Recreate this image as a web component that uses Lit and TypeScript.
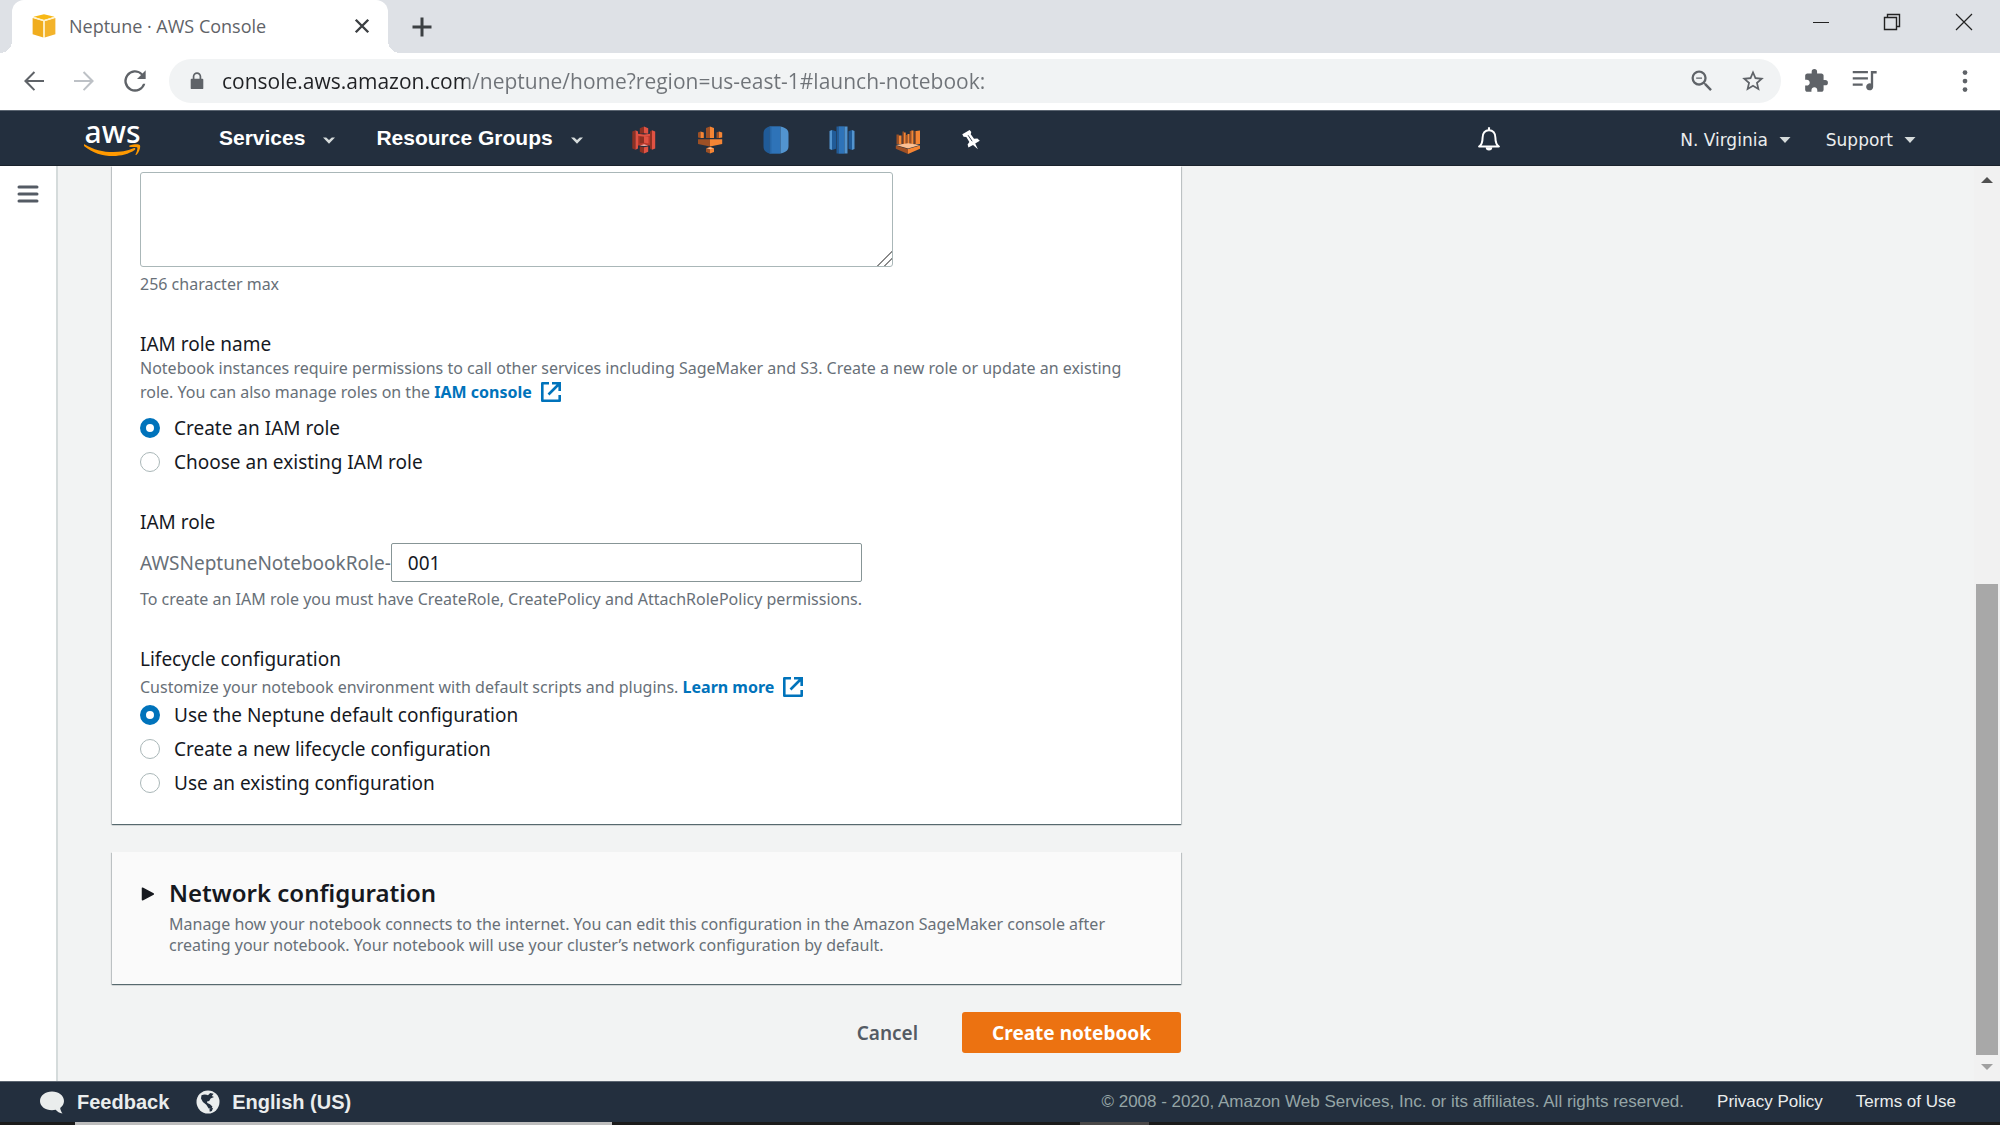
import { LitElement, html, svg, css } from "lit";
import { customElement, property, state } from "lit/decorators.js";

/* ---------- icons ---------- */

const icon = (size: number, body: unknown, box = "0 0 24 24") => html`<svg
  width=${size}
  height=${size}
  viewBox=${box}
  fill="currentColor"
  aria-hidden="true"
>${body}</svg>`;

const icons = {
  cube: icon(26, svg`
    <path fill="#f0ad1e" d="M1.5 4.5 11.4 7.6v15L1.5 19.6z"/>
    <path fill="#f3b32b" d="M22.5 4.5 12.6 7.6v15l9.9-3z"/>
    <path fill="#f8b814" d="M12 1.2 21.6 3.400 12 6.400 2.400 3.400z"/>
    <path fill="none" stroke="#fff2c8" stroke-width="1" d="M2 3.900 12 7l10-3.100M12 7v15.500"/>`),
  close: icon(20, svg`<path fill="none" stroke="currentColor" stroke-width="2.900" d="m4.500 4.500 15 15m0-15-15 15"/>`),
  plus: icon(24, svg`<path fill="none" stroke="currentColor" stroke-width="3" d="M12 2.500v19M2.500 12h19"/>`),
  minimize: icon(16, svg`<path fill="none" stroke="currentColor" d="M0 8.500h16"/>`, "0 0 16 16"),
  restore: icon(18, svg`<path fill="none" stroke="currentColor" stroke-width="1.400" d="M1.500 4.500h12v12h-12zM4.500 4.500v-3h12v12h-3"/>`, "0 0 18 18"),
  windowClose: icon(18, svg`<path fill="none" stroke="currentColor" stroke-width="1.200" d="m1 1 16 16m0-16L1 17"/>`, "0 0 18 18"),
  back: icon(30, svg`<path d="M20 11.200H7.200l5.700-5.900L11.800 4.200 4 12l7.800 7.800 1.100-1.100-5.700-5.900H20z"/>`),
  forward: icon(30, svg`<path d="M4 11.200h12.800l-5.700-5.900 1.100-1.100L20 12l-7.800 7.800-1.100-1.100 5.700-5.900H4z"/>`),
  reload: icon(32, svg`<path d="M17.650 6.350A8 8 0 1 0 19.730 14h-1.700a6.300 6.300 0 1 1-1.500-6.500L13.500 10.500H20V4z"/>`),
  lock: icon(18, svg`<path d="M4 7.500h12a1 1 0 0 1 1 1V18a1 1 0 0 1-1 1H4a1 1 0 0 1-1-1V8.500a1 1 0 0 1 1-1z"/><path fill="none" stroke="currentColor" stroke-width="1.900" d="M6.200 8V5a3.800 3.800 0 0 1 7.600 0v3"/>`, "0 0 20 20"),
  zoomOut: icon(28, svg`<path d="M15.500 14h-.790l-.280-.270A6.470 6.470 0 0 0 16 9.500 6.500 6.500 0 1 0 9.500 16c1.610 0 3.090-.590 4.230-1.570l.270.280v.790l5 4.990L20.490 19zm-6 0C7.010 14 5 11.990 5 9.500S7.010 5 9.500 5 14 7.010 14 9.500 11.990 14 9.500 14M7 8.900h5v1.200H7z"/>`),
  star: icon(26, svg`<path d="m22 9.240-7.190-.620L12 2 9.190 8.630 2 9.240l5.460 4.730L5.820 21 12 17.270 18.180 21l-1.630-7.030zM12 15.400l-3.760 2.270 1-4.280-3.320-2.880 4.380-.380L12 6.100l1.710 4.040 4.380.380-3.320 2.880 1 4.280z"/>`),
  puzzle: icon(26, svg`<path d="M20.500 11H19V7c0-1.100-.900-2-2-2h-4V3.500a2.500 2.500 0 0 0-5 0V5H4c-1.100 0-1.990.900-1.990 2v3.800H3.500c1.490 0 2.700 1.210 2.700 2.700s-1.210 2.700-2.700 2.700H2V20c0 1.100.900 2 2 2h3.800v-1.500c0-1.490 1.210-2.700 2.700-2.700s2.700 1.210 2.700 2.700V22H17c1.100 0 2-.900 2-2v-4h1.500a2.500 2.500 0 0 0 0-5"/>`),
  music: icon(28, svg`<path d="M1.500 3.500h13v1.900h-13zM1.500 8.800h13v1.900h-13zM1.500 14.200h8.500v1.900H1.500zM17 3.500h5v2h-3v11.500a3 3 0 1 1-2-2.800z"/>`),
  dots: icon(30, svg`<circle cx="12" cy="5.200" r="1.900"/><circle cx="12" cy="12" r="1.900"/><circle cx="12" cy="18.800" r="1.900"/>`),
  chevron: icon(14, svg`<path d="M1 4.500h3.200L7 7l2.800-2.500H13L7 10.800z"/>`, "0 0 14 14"),
  caret: icon(12, svg`<path d="M.500 3h11L6 9z"/>`, "0 0 12 12"),
  bell: icon(28, svg`<path fill="none" stroke="currentColor" stroke-width="1.700" stroke-linejoin="round" d="M3.500 18.500c2-1.300 3-3 3-7.500 0-4 2.200-6.600 5.500-6.600s5.500 2.600 5.500 6.600c0 4.500 1 6.200 3 7.500z"/><path d="M11.100 2h1.800v2.800h-1.800zM9.200 19h5.600a2.800 2.800 0 0 1-5.600 0z"/>`),
  pin: icon(22, svg`<path d="M2.500 5.800 10.500 1.200l1.800 2-.6 2.600 3.600 4.700 3.700-.2 2.600 2.600-5 3L19.500 22l-5.300-4.600-5 2.800-.9-3.300 1.900-2.800-3.300-5.400-3-.2z"/><path fill="none" stroke="#232f3e" stroke-width="1" d="m8.800 6.800 4.500 6.600"/>`),
  menu: icon(22, svg`<path fill="none" stroke="currentColor" stroke-width="3" stroke-linecap="round" d="M2 4h18M2 11h18M2 18h18"/>`, "0 0 22 22"),
  external: icon(22, svg`<path fill="none" stroke="currentColor" stroke-width="2.600" stroke-linejoin="round" d="M9 2.300H2.300v17.400h17.400V14"/><path fill="none" stroke="currentColor" stroke-width="2.600" d="M12 2.300h7.700V10M19.500 2.500 8.500 13.500"/>`, "0 0 22 22"),
  triangle: icon(14, svg`<path stroke="currentColor" stroke-linejoin="round" stroke-width="1.500" d="M1.500 1.200v11.600L12.300 7z"/>`, "0 0 14 14"),
  bubble: icon(26, svg`<path d="M13 2.500c6.600 0 12 4 12 9.400 0 2.900-1.500 5.300-3.800 7 .2 2 1 3.800 2.300 5.500-3-.3-5.300-1.600-6.800-3.600-1.200.3-2.400.4-3.700.4-6.600 0-12-4-12-9.300S6.400 2.500 13 2.500z"/>`, "0 0 26 26"),
  globe: icon(24, svg`<circle cx="12" cy="12" r="11.500"/><path fill="#232f3e" d="M5.500 5.200c2.500-1.200 5-.8 6.500.1l2.200-2.300 3.400.8-1.800 2.200 2.200 1-3.400 1.500-1.400 2.600-2.200.3.300 1.600 2.700 1.200 2.400 2.300-.7 1.800-3 .2-2.400-3.700-3.400-2.900-1.900-3.500zM13.500 19l3.600-1.200-1.200 3.300-2.200.6z"/>`),
  storage: icon(28, svg`
    <path fill="#8c3123" d="M2.300 5.500 5.500 4.300v19.400l-3.200-1.200z"/><path fill="#e05243" d="M5.500 4.300 8 5.500v17l-2.500 1.200z"/>
    <path fill="#8c3123" d="M20 5.500l2-1.200v19.400l-2-1.200z"/><path fill="#e05243" d="m22 4.300 3.200 1.200v17L22 23.700z"/>
    <path fill="#b8392c" d="M8 8.500h12v11H8z"/>
    <path fill="#8c3123" d="M9.800 2.200 14 .500v6.800l-4.200.5zM9.800 25.800 14 27.500v-6.300l-4.200-.6zM9.500 10.500h4.500v6.300l-4.500.7z"/>
    <path fill="#e05243" d="M18.200 2.200 14 .500v6.800l4.200.5zM18.200 25.800 14 27.500v-6.300l4.200-.6zM18.500 10.500H14v6.300l4.500.7zM8 7.800l6 1 6-1v2l-6 .7-6-.7z"/>
    <path fill="#f2b0a9" d="m9.800 19.400 4.200.7 4.200-.7-4.200-1.100z"/>`, "0 0 28 28"),
  network: icon(28, svg`
    <path fill="#9d5025" d="M2 6.500 4.500 5.500v6.500L2 11.500zM10 2l4-1.500V12h-4zM20.500 6.500l2.500-1v6.500h-2.500z"/>
    <path fill="#f58534" d="m4.500 5.500 3.300 1V12H4.500zM14 .500 18 2v10h-4zM23 5.500l3.200 1v5l-3.200.5z"/>
    <path fill="#9d5025" d="M2 13.300h12v7.200L2 18z"/><path fill="#f58534" d="M26.200 13.300H14v7.200L26.200 18z"/>
    <path fill="#9d5025" d="M10 22.300 14 21v6.500L10 26z"/><path fill="#f58534" d="M18 22.300 14 21v6.500l4-1.500z"/>
    <path fill="#fbbf93" d="m10.500 22.300 3.500-1.100 3.500 1.100-3.500 1z"/>`, "0 0 28 28"),
  database: icon(28, svg`
    <path fill="#205b98" d="M1.500 8C1.500 4 3 2 7.500.500V27.500C3 26 1.500 24 1.500 20z"/>
    <path fill="#2e73b8" d="M7.500.300h11v27.400h-11z"/>
    <path fill="#5294cf" d="M18.500.500C24.500 2 26.500 4 26.500 8v12c0 4-2 6-8 7.500z"/>
    <path fill="#205b98" d="M7.500.500h2v27h-2z" opacity=".5"/>`, "0 0 28 28"),
  warehouse: icon(28, svg`
    <path fill="#5294cf" d="M1.500 5 4 4v20l-2.500-1z"/><path fill="#205b98" d="m4 4 4 1.200v17.600L4 24z"/>
    <path fill="#205b98" d="M8.500.500h2v27h-2z"/><path fill="#2e73b8" d="M10.500.300h6v27.400h-6z"/><path fill="#5294cf" d="M16.500.500h3v27h-3z"/>
    <path fill="#205b98" d="M20.500 5.200 24 4v20l-3.500-1.200z"/><path fill="#5294cf" d="M24 4l2.500 1v18L24 24z"/>`, "0 0 28 28"),
  mapreduce: icon(28, svg`
    <path fill="#9d5025" d="M2.500 8.500h2.300V18H2.500zM8.500 5.500h1.500v13H8.500zM12 9h1.500v9H12zM15.800 5h1.500v13h-1.500zM20.500 5h1.500v14h-1.500z"/>
    <path fill="#f58534" d="M4.800 9.500h2.700V18H4.800zM10 6.500h1.700V18H10zM13.500 8h2v10h-2zM17.300 4.500h2.200V18h-2.200zM22 5l4-.5V18h-4z"/>
    <path fill="#fbbf93" d="M1.800 19 14 17.200 26 19l-12 3.600z"/>
    <path fill="#9d5025" d="M1.800 19.600 14 23v5L1.800 22.800z"/><path fill="#f58534" d="M26 19.600 14 23v5l12-5.200z"/>`, "0 0 28 28"),
  arrowUp: icon(12, svg`<path d="M0 9h12L6 3z"/>`, "0 0 12 12"),
  arrowDown: icon(12, svg`<path d="M0 3h12L6 9z"/>`, "0 0 12 12"),
};

const reset = css`
  *,
  *::before,
  *::after {
    box-sizing: border-box;
  }
  svg {
    display: block;
    flex: none;
  }
  button,
  input,
  textarea {
    font: inherit;
    color: inherit;
    margin: 0;
  }
  button {
    display: inline-flex;
    align-items: center;
    justify-content: center;
    padding: 0;
    border: 0;
    background: none;
  }
  a {
    color: inherit;
    text-decoration: none;
  }
`;

/* ---------- browser window frame ---------- */

@customElement("browser-bar")
class BrowserBar extends LitElement {
  static styles = [
    reset,
    css`
      :host {
        display: block;
        font-family: "Open Sans", "Noto Sans", sans-serif;
        color: #5f6368;
      }
      .strip {
        display: flex;
        align-items: center;
        height: 53px;
        padding: 0 20px 0 12px;
        background: #dee1e6;
      }
      .tab {
        position: relative;
        display: flex;
        align-items: center;
        gap: 12px;
        width: 376px;
        height: 53px;
        padding: 0 16px 2px 19px;
        border-radius: 12px 12px 0 0;
        background: #fff;
      }
      .tab::before,
      .tab::after {
        content: "";
        position: absolute;
        bottom: 0;
        width: 12px;
        height: 12px;
      }
      .tab::before {
        right: 100%;
        background: radial-gradient(circle at 0 0, transparent 12px, #fff 12px);
      }
      .tab::after {
        left: 100%;
        background: radial-gradient(circle at 100% 0, transparent 12px, #fff 12px);
      }
      .title {
        flex: 1;
        font-size: 18px;
        white-space: nowrap;
      }
      .dark {
        color: #3c4043;
      }
      .new-tab {
        margin-left: 22px;
      }
      .window {
        display: flex;
        align-items: center;
        gap: 54px;
        height: 44px;
        margin: 0 7px 9px auto;
        color: #222;
      }
      .toolbar {
        display: flex;
        align-items: center;
        height: 57px;
        padding: 0 20px 2px 19px;
        background: #fff;
      }
      .history {
        display: flex;
        align-items: center;
        gap: 20px;
        margin-right: 18px;
      }
      .faded {
        color: #bdc1c6;
      }
      .address {
        flex: 1;
        display: flex;
        align-items: center;
        height: 44px;
        padding: 0 15px 0 19px;
        border-radius: 22px;
        background: #f1f3f4;
      }
      /* host part of the address is darker than the path */
      .url {
        flex: 1;
        min-width: 0;
        margin-left: 16px;
        padding: 0;
        border: 0;
        outline: 0;
        font-size: 21px;
        color: transparent;
        background: linear-gradient(to right, #202124 243px, #6f7378 243px);
        -webkit-background-clip: text;
        background-clip: text;
      }
      .address button + button {
        margin-left: 24px;
      }
      .tools {
        display: flex;
        align-items: center;
        gap: 22px;
        margin-left: 22px;
      }
      .more {
        margin-left: 49px;
      }
    `,
  ];

  render() {
    return html`
      <div class="strip">
        <div class="tab">
          ${icons.cube}
          <span class="title">Neptune · AWS Console</span>
          <button class="dark" aria-label="Close tab">${icons.close}</button>
        </div>
        <button class="new-tab dark" aria-label="New tab">${icons.plus}</button>
        <div class="window">
          <button aria-label="Minimize">${icons.minimize}</button>
          <button aria-label="Restore">${icons.restore}</button>
          <button aria-label="Close">${icons.windowClose}</button>
        </div>
      </div>
      <div class="toolbar">
        <div class="history">
          <button aria-label="Back">${icons.back}</button>
          <button class="faded" aria-label="Forward">${icons.forward}</button>
          <button aria-label="Reload">${icons.reload}</button>
        </div>
        <div class="address">
          ${icons.lock}
          <input
            class="url"
            aria-label="Address"
            spellcheck="false"
            value="console.aws.amazon.com/neptune/home?region=us-east-1#launch-notebook:"
          />
          <button aria-label="Zoom out">${icons.zoomOut}</button>
          <button aria-label="Bookmark">${icons.star}</button>
        </div>
        <div class="tools">
          <button aria-label="Extensions">${icons.puzzle}</button>
          <button aria-label="Media">${icons.music}</button>
          <button class="more" aria-label="More">${icons.dots}</button>
        </div>
      </div>
    `;
  }
}

/* ---------- console navigation ---------- */

@customElement("console-nav")
class ConsoleNav extends LitElement {
  static styles = [
    reset,
    css`
      :host {
        display: block;
        background: #232f3e;
        border-top: 1px solid #5b6571;
        border-bottom: 1px solid #1a222c;
        color: #fff;
      }
      nav {
        display: flex;
        align-items: center;
        height: 54px;
        padding: 0 84px;
      }
      .logo {
        display: flex;
        flex-direction: column;
        align-items: center;
        width: 57px;
        margin-right: 78px;
        font: 500 30px/24px "Noto Sans", sans-serif;
      }
      .menu {
        gap: 17px;
        margin-right: 40px;
        font: 700 21px/24px "Liberation Sans", Arial, sans-serif;
      }
      .menu svg,
      .side svg {
        color: #d5dbdb;
      }
      .menu svg {
        margin-top: 4px;
      }
      .shortcuts {
        display: flex;
        align-items: center;
        gap: 38px;
        margin-left: 6px;
        padding-top: 4px;
      }
      .bell {
        margin-left: auto;
        margin-right: 177px;
        padding-top: 2px;
      }
      .side {
        gap: 11px;
        padding-top: 4px;
        color: #eaeded;
        font: 17px/24px "DejaVu Sans", Verdana, sans-serif;
      }
      .side + .side {
        margin-left: 35px;
      }
    `,
  ];

  private shortcuts: [string, unknown][] = [
    ["S3", icons.storage],
    ["VPC", icons.network],
    ["RDS", icons.database],
    ["Redshift", icons.warehouse],
    ["EMR", icons.mapreduce],
    ["Pin shortcuts", icons.pin],
  ];

  render() {
    return html`
      <nav>
        <a class="logo" href="#home">
          <span>aws</span>
          <svg width="57" height="13" viewBox="0 0 57 13" aria-hidden="true">
            <path fill="#f90" d="M.8.4C15 9 34 10.500 49.500 4.200c1.500-.6 2.600.8 1.200 1.900C37.500 15 14.500 14.200.3 2.300-.5 1.400-.2 0 .8.400z" />
            <path fill="#f90" d="M45.500 1.600C49 .2 54.500-.3 55.800 1c1.200 1.500-.4 7.200-3.300 9.800-.6.5-1.200.2-.9-.5.900-2 2.300-5.600 1.600-6.700-.7-1-4.500-.7-7-.5-.9.100-1.300-1-.7-1.500z" />
          </svg>
        </a>
        <button class="menu">Services ${icons.chevron}</button>
        <button class="menu">Resource Groups ${icons.chevron}</button>
        <div class="shortcuts">
          ${this.shortcuts.map(([name, art]) => html`<button aria-label=${name}>${art}</button>`)}
        </div>
        <button class="bell" aria-label="Notifications">${icons.bell}</button>
        <button class="side">N. Virginia ${icons.caret}</button>
        <button class="side">Support ${icons.caret}</button>
      </nav>
    `;
  }
}

/* ---------- radio list ---------- */

@customElement("radio-list")
class RadioList extends LitElement {
  static styles = [
    reset,
    css`
      :host {
        display: block;
      }
      .list {
        display: flex;
        flex-direction: column;
        gap: 10px;
      }
      label {
        display: flex;
        align-items: center;
        gap: 14px;
        font-size: 19px;
        line-height: 24px;
      }
      input {
        appearance: none;
        width: 20px;
        height: 20px;
        border: 1px solid #aab7b8;
        border-radius: 50%;
        background: #fff;
      }
      input:checked {
        border: 6px solid #0073bb;
      }
    `,
  ];

  @property() name = "";
  @property() legend = "";
  @property({ attribute: false }) options: string[] = [];
  @state() private chosen = 0;

  render() {
    return html`
      <div class="list" role="radiogroup" aria-label=${this.legend}>
        ${this.options.map(
          (text, i) => html`
            <label>
              <input
                type="radio"
                name=${this.name}
                .checked=${i === this.chosen}
                @change=${() => (this.chosen = i)}
              />
              ${text}
            </label>
          `
        )}
      </div>
    `;
  }
}

/* ---------- page ---------- */

@customElement("app-root")
class AppRoot extends LitElement {
  static styles = [
    reset,
    css`
      :host {
        display: block;
        font-family: "Noto Sans", "Open Sans", sans-serif;
        color: #16191f;
      }
      .page {
        display: flex;
        flex-direction: column;
        min-height: 100vh;
      }
      .body {
        flex: 1;
        display: flex;
        background: #f2f3f3;
      }
      .rail {
        display: flex;
        justify-content: center;
        align-items: flex-start;
        width: 58px;
        padding-top: 17px;
        border-right: 2px solid #d5dbdb;
        background: #fff;
        color: #545b64;
      }
      main {
        flex: 1;
        min-width: 0;
        padding: 0 24px 27px 54px;
      }
      form {
        display: flex;
        flex-direction: column;
        max-width: 1069px;
      }
      .card {
        background: #fff;
        box-shadow: 0 1px 1px 0 rgba(0, 28, 36, 0.5), 1px 1px 1px 0 rgba(0, 28, 36, 0.15),
          -1px 1px 1px 0 rgba(0, 28, 36, 0.15);
      }
      .fields {
        display: flex;
        flex-direction: column;
        gap: 36px;
        padding: 6px 28px 29px;
      }
      .fields textarea {
        display: block;
        width: 753px;
        max-width: 100%;
        height: 95px;
        padding: 8px 12px;
        border: 1px solid #aab7b8;
        border-radius: 3px;
        background: #fff;
      }
      textarea::-webkit-resizer {
        background: linear-gradient(
          135deg,
          transparent 48%,
          #8a8a8a 48% 54%,
          transparent 54% 73%,
          #8a8a8a 73% 79%,
          transparent 79%
        );
      }
      .label {
        display: block;
        margin: 0;
        font-size: 19px;
        font-weight: 400;
        line-height: 24px;
      }
      .hint {
        margin: 0;
        font-size: 16px;
        line-height: 24px;
        color: #687078;
      }
      .below {
        margin-top: 5px;
      }
      .link {
        font-weight: 700;
        color: #0073bb;
      }
      .link svg {
        display: inline-block;
        margin-left: 4px;
        vertical-align: -5px;
      }
      .roomy {
        margin-top: 12px;
      }
      .tight {
        margin-top: 4px;
      }
      .prefixed {
        display: flex;
        align-items: center;
        margin-top: 9px;
        font-size: 19px;
        color: #687078;
      }
      .prefixed input {
        width: 471px;
        height: 39px;
        padding: 0 16px;
        border: 1px solid #879596;
        border-radius: 2px;
        background: #fff;
        color: #16191f;
      }
      .network {
        display: flex;
        align-items: flex-start;
        gap: 14px;
        margin-top: 28px;
        padding: 25px 28px 28px 29px;
        background: #fafafa;
      }
      .network > button {
        height: 34px;
      }
      h2 {
        margin: 0;
        font-size: 24px;
        font-weight: 600;
        line-height: 32px;
      }
      .network .hint {
        margin-top: 5px;
        line-height: 21px;
      }
      .actions {
        display: flex;
        justify-content: flex-end;
        gap: 14px;
        margin-top: 28px;
        font-size: 19px;
        font-weight: 600;
      }
      .actions button {
        height: 41px;
        padding: 0 30px;
        border-radius: 3px;
        color: #545b64;
      }
      .actions .primary {
        background: #ec7211;
        color: #fff;
        font-weight: 700;
      }
      .scroll {
        display: flex;
        flex-direction: column;
        align-items: center;
        width: 26px;
        padding: 8px 2px;
        background: #f1f1f1;
        color: #505050;
      }
      .thumb {
        width: 22px;
        height: 471px;
        margin-top: auto;
        margin-bottom: 6px;
        background: #a8a8a8;
      }
      .scroll .end {
        color: #a0a0a0;
      }
      footer {
        display: flex;
        align-items: center;
        height: 41px;
        padding: 0 44px 0 39px;
        border-top: 1px solid #5b6571;
        background: #232f3e;
        color: #eaeded;
        font: 17px/24px "Liberation Sans", Arial, sans-serif;
      }
      .tool {
        gap: 12px;
        margin-right: 27px;
        font-size: 20px;
        font-weight: 700;
      }
      .legal {
        display: flex;
        gap: 33px;
        margin-left: auto;
      }
      .copyright {
        color: #95a5a6;
      }
      .taskbar {
        display: flex;
        gap: 468px;
        height: 3px;
        padding-left: 75px;
        background: #1b1b1b;
      }
      .taskbar span {
        width: 537px;
        background: #bdbdbd;
      }
      .taskbar .dim {
        width: 69px;
        background: #4a4848;
      }
    `,
  ];

  render() {
    return html`
      <div class="page">
        <browser-bar></browser-bar>
        <console-nav></console-nav>
        <div class="body">
          <aside class="rail">
            <button aria-label="Open navigation">${icons.menu}</button>
          </aside>
          <main>
            <form @submit=${(e: Event) => e.preventDefault()}>
              <div class="card fields">
                <div>
                  <textarea aria-label="Description" aria-describedby="description-hint"></textarea>
                  <p class="hint below" id="description-hint">256 character max</p>
                </div>
                <section>
                  <h3 class="label">IAM role name</h3>
                  <p class="hint">
                    Notebook instances require permissions to call other services including SageMaker and S3. Create a new role or update an existing role. You can also manage roles on the
                    <a class="link" href="#iam">IAM console ${icons.external}</a>
                  </p>
                  <radio-list
                    class="roomy"
                    name="role"
                    legend="IAM role name"
                    .options=${["Create an IAM role", "Choose an existing IAM role"]}
                  ></radio-list>
                </section>
                <section>
                  <label class="label" for="role">IAM role</label>
                  <div class="prefixed">
                    <span>AWSNeptuneNotebookRole-</span>
                    <input id="role" value="001" />
                  </div>
                  <p class="hint below">
                    To create an IAM role you must have CreateRole, CreatePolicy and AttachRolePolicy permissions.
                  </p>
                </section>
                <section>
                  <h3 class="label">Lifecycle configuration</h3>
                  <p class="hint tight">
                    Customize your notebook environment with default scripts and plugins.
                    <a class="link" href="#lifecycle">Learn more ${icons.external}</a>
                  </p>
                  <radio-list
                    class="tight"
                    name="lifecycle"
                    legend="Lifecycle configuration"
                    .options=${[
                      "Use the Neptune default configuration",
                      "Create a new lifecycle configuration",
                      "Use an existing configuration",
                    ]}
                  ></radio-list>
                </section>
              </div>
              <section class="card network">
                <button type="button" aria-expanded="false" aria-labelledby="network-title">
                  ${icons.triangle}
                </button>
                <div>
                  <h2 id="network-title">Network configuration</h2>
                  <p class="hint">
                    Manage how your notebook connects to the internet. You can edit this configuration in the Amazon SageMaker console after creating your notebook. Your notebook will use your cluster’s network configuration by default.
                  </p>
                </div>
              </section>
              <div class="actions">
                <button type="button">Cancel</button>
                <button class="primary" type="submit">Create notebook</button>
              </div>
            </form>
          </main>
          <div class="scroll" aria-hidden="true">
            ${icons.arrowUp}
            <div class="thumb"></div>
            <span class="end">${icons.arrowDown}</span>
          </div>
        </div>
        <footer>
          <button class="tool">${icons.bubble} Feedback</button>
          <button class="tool">${icons.globe} English (US)</button>
          <div class="legal">
            <span class="copyright">© 2008 - 2020, Amazon Web Services, Inc. or its affiliates. All rights reserved.</span>
            <a href="#privacy">Privacy Policy</a>
            <a href="#terms">Terms of Use</a>
          </div>
        </footer>
        <div class="taskbar"><span></span><span class="dim"></span></div>
      </div>
    `;
  }
}
